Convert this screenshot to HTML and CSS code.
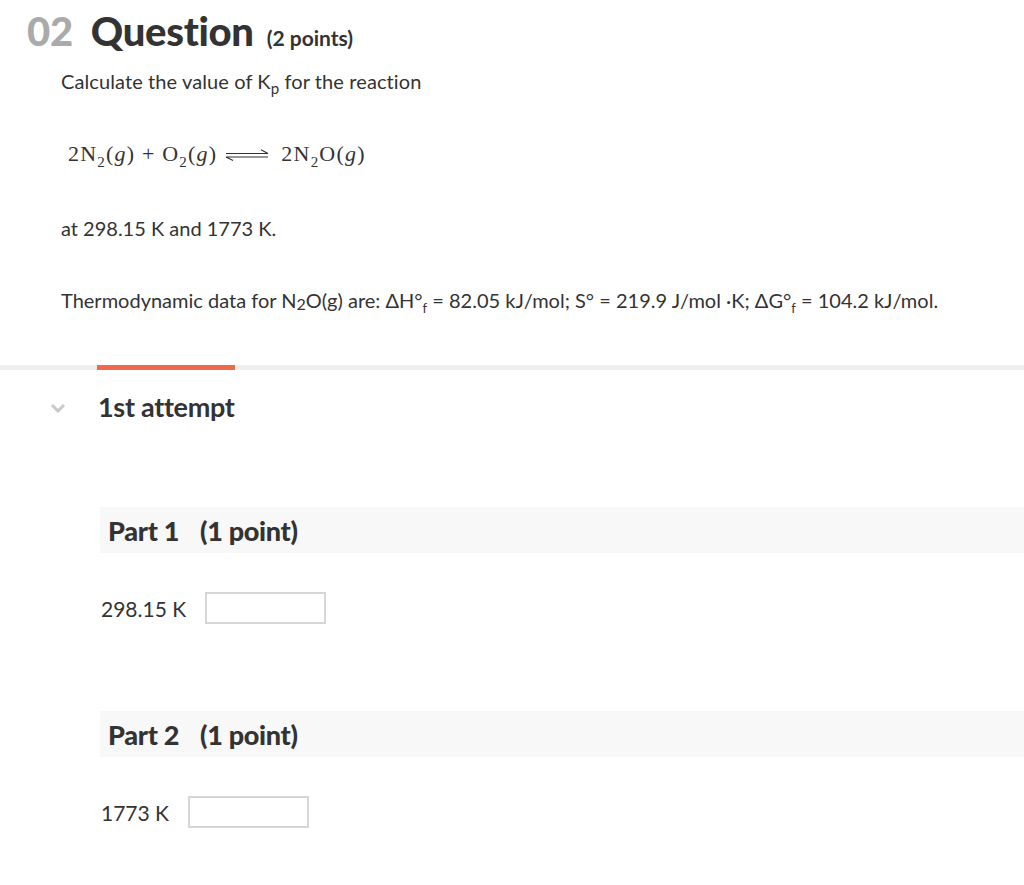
FILE: index.html
```html
<!DOCTYPE html>
<html>
<head>
<meta charset="utf-8">
<link rel="stylesheet" href="styles.css">
</head>
<body>
<div class="question">
  <h1 class="q-title"><span class="q-num">02</span><span class="q-word">Question</span><span class="q-points">(2 points)</span></h1>
  <div class="q-body">
    <p class="line1">Calculate the value of K<sub>p</sub> for the reaction</p>
    <div class="equation">
      <span>2N<sub>2</sub>(<i>g</i>) + O<sub>2</sub>(<i>g</i>)</span>
      <svg class="eq-arrow" width="46" height="12" viewBox="0 0 46 12"><path d="M2 4.5H44M44 4.5L37 0.8M2 8H44M2 8L9 11.5" fill="none" stroke="#333" stroke-width="1.1"/></svg>
      <span>2N<sub>2</sub>O(<i>g</i>)</span>
    </div>
    <p class="line2">at 298.15 K and 1773 K.</p>
    <p class="line3">Thermodynamic data for N<sub class="s2">2</sub>O(g) are: ΔH°<sub class="sf">f</sub> = 82.05 kJ/mol; S° = 219.9 J/mol ·K; ΔG°<sub class="sf">f</sub> = 104.2 kJ/mol.</p>
  </div>
</div>
<div class="divider"><div class="tab-accent"></div></div>
<div class="attempt">
  <div class="attempt-head">
    <svg class="chev" width="16" height="10" viewBox="0 0 16 10"><path d="M2 2L8 8L14 2" fill="none" stroke="#c8c8c8" stroke-width="3"/></svg>
    <h2 class="attempt-title">1st attempt</h2>
  </div>
  <div class="part">
    <div class="part-head">Part 1 <span class="pts">(1 point)</span></div>
    <div class="answer"><span>298.15 K</span><input class="ans-input" type="text"></div>
  </div>
  <div class="part part2">
    <div class="part-head">Part 2 <span class="pts">(1 point)</span></div>
    <div class="answer"><span>1773 K</span><input class="ans-input" type="text"></div>
  </div>
</div>
</body>
</html>
```
FILE: styles.css
```css
html, body {
  margin: 0;
  padding: 0;
  background: #fff;
  font-family: Lato, "Open Sans", sans-serif;
  color: #333;
}
.question {
  padding: 7px 0 0 27px;
}
.q-title {
  margin: 0;
  display: flex;
  align-items: baseline;
  font-size: 40px;
  font-weight: 900;
  line-height: 48px;
  letter-spacing: -0.3px;
}
.q-num {
  color: #aaa;
  margin-right: 18px;
}
.q-word {
  color: #333;
}
.q-points {
  font-size: 21px;
  font-weight: 700;
  margin-left: 13px;
  letter-spacing: 0;
}
.q-body {
  padding-left: 34px;
  font-size: 20px;
  line-height: 24px;
}
.q-body p { margin: 0; }
.q-body sub {
  font-size: 15px;
  vertical-align: -5px;
  line-height: 0;
}
.line1 { margin-top: 7px !important; letter-spacing: 0.1px; }
.equation {
  margin-top: 46px;
  height: 30px;
  padding-left: 7px;
  font-family: "Liberation Serif", "DejaVu Serif", serif;
  font-size: 22px;
  letter-spacing: 1.2px;
  display: flex;
  align-items: center;
}
.equation sub { font-size: 15px; vertical-align: -6px; }
.eq-arrow { margin: 2px 11px 0 7px; }
.line2 { margin-top: 47px !important; }
.line3 { margin-top: 48px !important; }
.line3 .s2 { font-size: 16px; vertical-align: -2px; }
.line3 .sf { font-size: 13px; vertical-align: -5px; }
.divider {
  margin-top: 53px;
  height: 5px;
  background: #eeeeee;
  position: relative;
}
.tab-accent {
  position: absolute;
  left: 97px;
  top: 0;
  width: 138px;
  height: 5px;
  background: #ef6a4c;
}
.attempt-head {
  display: flex;
  align-items: center;
  padding-left: 50px;
  margin-top: 22px;
}
.chev { margin-right: 32px; margin-top: 2px; }
.attempt-title {
  margin: 0;
  font-size: 27px;
  font-weight: 700;
  line-height: 30px;
  letter-spacing: -0.3px;
}
.part {
  margin-left: 100px;
  margin-top: 85px;
}
.part2 { margin-top: 87px; }
.part-head {
  background: #f8f8f8;
  height: 46px;
  display: flex;
  align-items: center;
  padding-left: 8px;
  font-size: 27px;
  font-weight: 900;
  letter-spacing: -0.3px;
}
.pts { margin-left: 21px; }
.answer {
  display: flex;
  align-items: center;
  margin-top: 39px;
  font-size: 21px;
  padding-left: 1px;
}
.answer span { margin-right: 19px; }
.ans-input {
  width: 121px;
  height: 32px;
  box-sizing: border-box;
  border: 2px solid #d6d6d6;
  background: #fff;
  margin: 0;
  padding: 0;
}
```
